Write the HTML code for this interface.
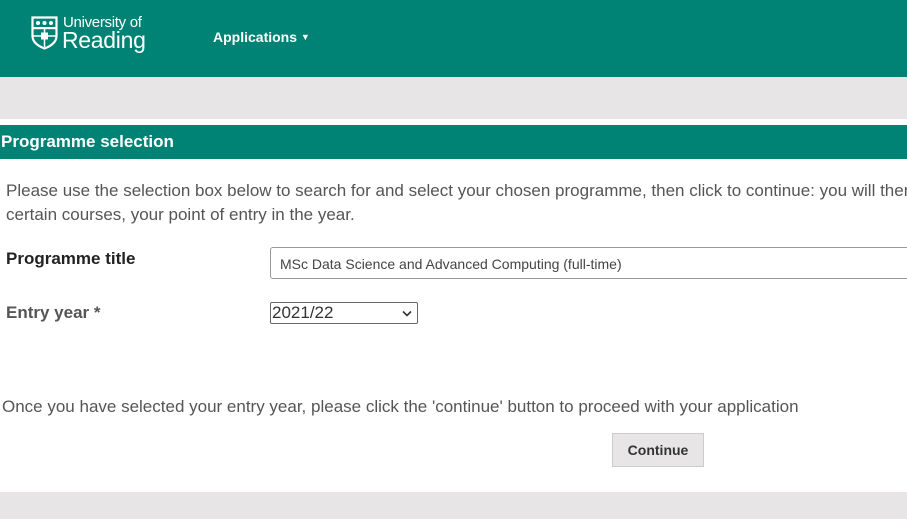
<!DOCTYPE html>
<html><head><style>
body{margin:0;width:907px;height:519px;overflow:hidden;background:#fff;font-family:"Liberation Sans",Arial,sans-serif;position:relative}
.hdr{position:absolute;left:0;top:0;width:907px;height:77px;background:#008374}
.gray1{position:absolute;top:77px;left:0;width:907px;height:42px;background:#e7e5e5}
.bar{position:absolute;top:125px;left:0;width:907px;height:34px;background:#008374;color:#fff;font-weight:bold;font-size:17px;line-height:33px;padding-left:1px}
.t{position:absolute;color:#555;font-size:17px;white-space:nowrap}
.gray2{position:absolute;top:492px;left:0;width:907px;height:27px;background:#e7e5e5}
</style></head><body>
<div class="hdr">
<svg style="position:absolute;left:31px;top:16px" width="27" height="34" viewBox="0 0 27 34">
<path d="M1.5 1.5H25.5V20C25.5 26 20 30 13.5 32.5C7 30 1.5 26 1.5 20Z" fill="none" stroke="#fff" stroke-width="2.2"/>
<rect x="1.5" y="11" width="24" height="2.2" fill="#fff"/>
<circle cx="7" cy="7" r="2" fill="#fff"/><circle cx="13.5" cy="7" r="2" fill="#fff"/><circle cx="20" cy="7" r="2" fill="#fff"/>
<path d="M13.5 13V31M2 20H25" stroke="#fff" stroke-width="1.5"/>
<rect x="10" y="16.5" width="7" height="7" fill="#fff"/>
</svg>
<div style="position:absolute;left:63px;top:14px;color:#fff;font-size:15px;letter-spacing:-0.3px">University of</div>
<div style="position:absolute;left:62px;top:27px;color:#fff;font-size:23px;letter-spacing:-0.3px">Reading</div>
<div style="position:absolute;left:213px;top:29px;color:#fff;font-size:14px;font-weight:bold">Applications <span style="font-size:9px;vertical-align:2px">▼</span></div>
</div>
<div class="gray1"></div>
<div class="bar">Programme selection</div>
<div class="t" style="left:6px;top:181px">Please use the selection box below to search for and select your chosen programme, then click to continue: you will then</div>
<div class="t" style="left:6px;top:205px">certain courses, your point of entry in the year.</div>
<div class="t" style="left:6px;top:249px;color:#222;font-weight:bold">Programme title</div>
<div style="position:absolute;left:270px;top:247px;width:660px;height:32px;border:1px solid #999;border-radius:3px;box-sizing:border-box;font-size:14px;color:#444;line-height:32px;padding-left:9px">MSc Data Science and Advanced Computing (full-time)</div>
<div class="t" style="left:6px;top:303px;font-weight:bold">Entry year *</div>
<div style="position:absolute;left:270px;top:302px;width:148px;height:22px;border:1px solid #666;border-radius:2px;box-sizing:border-box;font-size:17px;color:#333;line-height:20px;padding-left:1px">2021/22<svg style="position:absolute;right:5px;top:7px" width="10" height="7" viewBox="0 0 10 7"><path d="M1 1.5L5 5.5L9 1.5" fill="none" stroke="#333" stroke-width="1.6"/></svg></div>
<div class="t" style="left:2px;top:397px">Once you have selected your entry year, please click the 'continue' button to proceed with your application</div>
<div style="position:absolute;left:612px;top:433px;width:92px;height:34px;background:#e7e5e5;border:1px solid #ccc;box-sizing:border-box;font-size:14px;font-weight:bold;color:#333;text-align:center;line-height:32px">Continue</div>
<div class="gray2"></div>
</body></html>
